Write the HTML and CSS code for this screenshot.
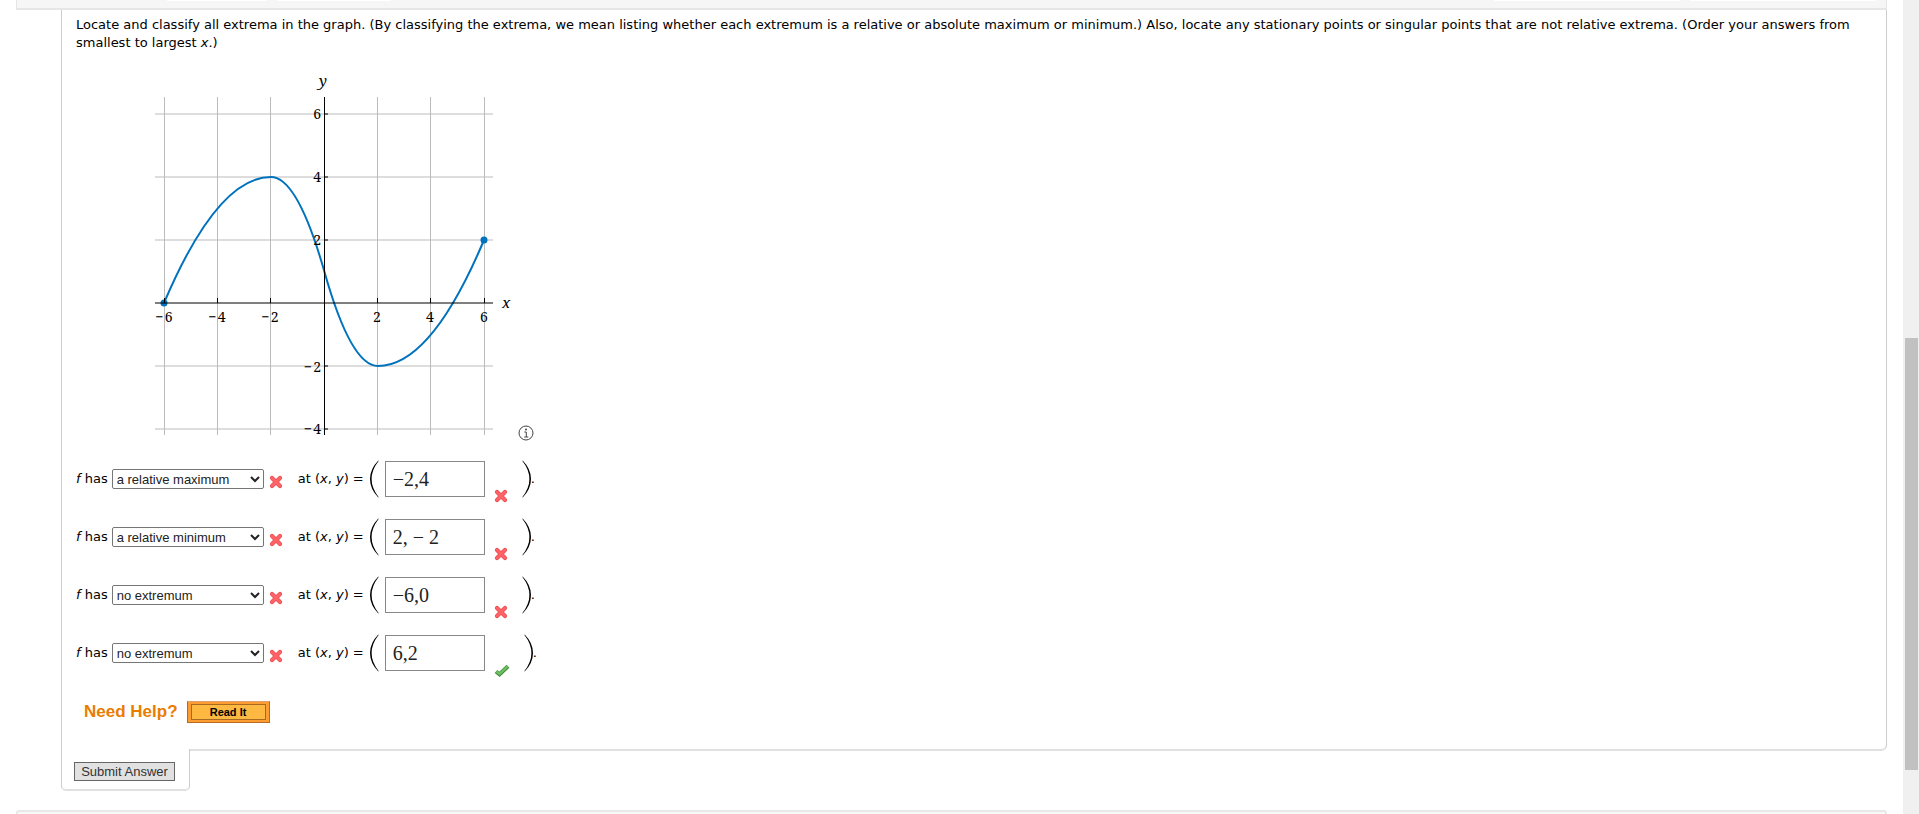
FILE: index.html
```html
<!DOCTYPE html>
<html lang="en">

<head>
  <meta charset="UTF-8">
  <meta name="viewport" content="width=device-width, initial-scale=1.0">
  <title>Extrema</title>
  <link rel="stylesheet" href="styles.css">
</head>

<body>
  <!-- shared answer marks and tall brackets -->
  <svg class="defs" aria-hidden="true">
    <symbol id="wrong" viewBox="0 0 14 14">
      <path d="M3 3L11 11M11 3L3 11" stroke="#ee484c" stroke-width="4.2" stroke-linecap="round" />
      <path d="M3 3L11 11M11 3L3 11" stroke="#fd6468" stroke-width="2.8" stroke-linecap="round" />
    </symbol>
    <symbol id="right" viewBox="0 0 16 14">
      <path d="M2 8.500L5.500 11.300L14 3.200" fill="none" stroke="#3f8f3b" stroke-width="4" />
      <path d="M2.500 8.500L5.500 11L13.500 3.400" fill="none" stroke="#6cbf63" stroke-width="2.400" />
    </symbol>
    <symbol id="open" viewBox="0 0 9 38">
      <path d="M8.300 0.500Q0 9 0 19T8.300 37.500L8.600 37Q1.600 28 1.600 19T8.600 1Z" />
    </symbol>
    <symbol id="close" viewBox="0 0 9 38">
      <path d="M0.700 0.500Q9 9 9 19T0.700 37.500L0.400 37Q7.400 28 7.400 19T0.400 1Z" />
    </symbol>
  </svg>

  <div class="page">
    <div class="main">
      <div class="top-bar"><span></span><span></span><i></i><span></span><span></span></div>

      <form class="question">
        <div class="content">
          <p>Locate and classify all extrema in the graph. (By classifying the extrema, we mean listing whether each extremum is a relative or absolute maximum or minimum.) Also, locate any stationary points or singular points that are not relative extrema. (Order your answers from smallest to largest <i>x</i>.)</p>

          <div class="graph">
            <svg width="376" height="376" viewBox="140 65 376 376" role="img" aria-label="Graph of f">
              <path class="grid" d="M164.500 97V435M217.500 97V435M270.500 97V435M377.500 97V435M430.500 97V435M484.500 97V435" />
              <path class="grid" d="M155 114H493M155 177H493M155 240H493M155 366H493M155 429H493" />
              <path class="curve" d="M164 303Q217.500 177 271 177Q297.500 177 324.500 272Q351 366 378 366Q431 366 484 240" />
              <circle cx="164" cy="303" r="3.500" />
              <circle cx="484" cy="240" r="3.500" />
              <path class="axis" d="M324.500 97V435M324 114H328M324 177H328M324 240H328M324 366H328M324 429H328" />
              <path class="axis" d="M155 303H493M164.500 303V298M217.500 303V298M270.500 303V298M377.500 303V298M430.500 303V298M484.500 303V298" />
              <g class="ticks" text-anchor="end">
                <text x="321" y="119">6</text>
                <text x="321" y="182">4</text>
                <text x="321" y="245">2</text>
                <text x="321" y="372">−&#8202;2</text>
                <text x="321" y="434">−&#8202;4</text>
              </g>
              <g class="ticks" text-anchor="middle">
                <text x="164" y="322">−&#8202;6</text>
                <text x="217" y="322">−&#8202;4</text>
                <text x="270" y="322">−&#8202;2</text>
                <text x="377" y="322">2</text>
                <text x="430" y="322">4</text>
                <text x="484" y="322">6</text>
              </g>
              <text class="name" x="323" y="86">y</text>
              <text class="name" x="506" y="308">x</text>
            </svg>
            <svg class="info" width="16" height="16" viewBox="0 0 16 16">
              <circle cx="8" cy="8" r="7" />
              <circle class="dot" cx="8" cy="4.500" r="1" />
              <path d="M6.300 7H8.300V12M6.300 12H10.300" />
            </svg>
          </div>

          <div class="row">
            <label for="s1"><i>f</i> has</label>
            <select id="s1"><option>a relative maximum</option></select>
            <svg class="mark"><use href="#wrong" /></svg>
            <label class="at" for="p1">at (<i>x</i>, <i>y</i>) =</label>
            <svg class="paren"><use href="#open" /></svg>
            <input id="p1" type="text" value="−2,4">
            <svg class="mark low"><use href="#wrong" /></svg>
            <svg class="paren"><use href="#close" /></svg><span>.</span>
          </div>
          <div class="row">
            <label for="s2"><i>f</i> has</label>
            <select id="s2"><option>a relative minimum</option></select>
            <svg class="mark"><use href="#wrong" /></svg>
            <label class="at" for="p2">at (<i>x</i>, <i>y</i>) =</label>
            <svg class="paren"><use href="#open" /></svg>
            <input id="p2" type="text" value="2, − 2">
            <svg class="mark low"><use href="#wrong" /></svg>
            <svg class="paren"><use href="#close" /></svg><span>.</span>
          </div>
          <div class="row">
            <label for="s3"><i>f</i> has</label>
            <select id="s3"><option>no extremum</option></select>
            <svg class="mark"><use href="#wrong" /></svg>
            <label class="at" for="p3">at (<i>x</i>, <i>y</i>) =</label>
            <svg class="paren"><use href="#open" /></svg>
            <input id="p3" type="text" value="−6,0">
            <svg class="mark low"><use href="#wrong" /></svg>
            <svg class="paren"><use href="#close" /></svg><span>.</span>
          </div>
          <div class="row">
            <label for="s4"><i>f</i> has</label>
            <select id="s4"><option>no extremum</option></select>
            <svg class="mark"><use href="#wrong" /></svg>
            <label class="at" for="p4">at (<i>x</i>, <i>y</i>) =</label>
            <svg class="paren"><use href="#open" /></svg>
            <input id="p4" type="text" value="6,2">
            <svg class="mark low ok"><use href="#right" /></svg>
            <svg class="paren"><use href="#close" /></svg><span>.</span>
          </div>

          <div class="help">
            <b>Need Help?</b>
            <button type="button"><span>Read It</span></button>
          </div>
        </div>
        <div class="submit">
          <button type="submit">Submit Answer</button>
        </div>
      </form>

      <div class="next"></div>
    </div>
    <div class="scrollbar"><div class="thumb"></div></div>
  </div>
</body>

</html>
```
FILE: styles.css
```css
* {
  box-sizing: border-box;
}

body {
  margin: 0;
  background: #fff;
  color: #000;
  font: 13px/18px Verdana, "DejaVu Sans", sans-serif;
}

p {
  margin: 0;
}

.defs {
  display: none;
}

.page {
  display: flex;
  height: 100vh;
  overflow: hidden;
}

.main {
  flex: 1;
  padding: 0 16px;
}

.scrollbar {
  width: 16px;
  padding: 338px 1px 0 2px;
  background: #f0f0f0;
}

.thumb {
  height: 432px;
  background: #c1c1c1;
}

.top-bar {
  display: flex;
  gap: 10px;
  height: 10px;
  padding: 0 10px 0 150px;
  border: solid #e6e6e6;
  border-width: 0 1px 2px;
  background: #f6f6f6;
}

/* lower edges of the buttons above */
.top-bar span {
  width: 100px;
  height: 1px;
  background: #fff;
}

.top-bar span + span {
  width: 114px;
}

.top-bar i {
  flex: 1;
}

.top-bar i ~ span {
  width: 186px;
}

.question {
  margin-left: 45px;
}

.content {
  padding: 6px 14px 0;
  height: 741px;
  border: solid #ccc;
  border-width: 0 1px 2px;
  border-radius: 0 0 6px 0;
  border-bottom-color: #e0e0e0;
}

.graph {
  display: flex;
  align-items: flex-end;
  padding: 13px 0 9px 64px;
}

.graph text {
  fill: #000;
  stroke: none;
}

.grid {
  stroke: #bbb;
}

.curve {
  fill: none;
  stroke: #0072bd;
  stroke-width: 2;
}

.graph circle {
  fill: #0072bd;
}

.axis {
  stroke: #000;
}

.ticks {
  font: 14px "Noto Serif", "DejaVu Serif", serif;
}

.name {
  font: italic 15px "Noto Serif", "DejaVu Serif", serif;
  text-anchor: middle;
}

.graph .info {
  margin-left: 2px;
  fill: none;
  stroke: #444;
}

.graph .info circle {
  fill: none;
}

.graph .info .dot {
  fill: #444;
  stroke: none;
}

.row {
  display: flex;
  align-items: center;
  height: 58px;
}

.row select {
  width: 152px;
  height: 20px;
  margin-left: 4px;
  padding: 0;
  border: 1px solid #767676;
  border-radius: 2px;
  background: #fff;
  color: #222;
  font: 13px "Liberation Sans", Arial, sans-serif;
}

.mark {
  width: 14px;
  height: 14px;
  margin: 5px 0 0 5px;
}

.at {
  margin-left: 15px;
}

.paren {
  width: 9px;
  height: 38px;
  margin-left: 6px;
}

.row input {
  width: 100px;
  height: 36px;
  margin-left: 6px;
  padding: 0 7px;
  border: 1px solid #888;
  color: #222;
  font: 20px "Liberation Serif", serif;
}

.low {
  margin: 34px 8px 0 9px;
}

.ok {
  width: 16px;
}

.help {
  display: flex;
  align-items: center;
  padding: 19px 0 0 8px;
}

.help b {
  color: #e97d00;
  font: bold 17px/22px "Liberation Sans", Arial, sans-serif;
}

.help button {
  width: 83px;
  height: 22px;
  margin-left: 9px;
  padding: 2px 3px;
  border: 1px solid #ba6a20;
  border-top-color: #e0a070;
  background: #fb9d32;
}

.help button span {
  display: block;
  border: 1px solid #a86a20;
  background: #fdb942;
  font: bold 11px/14px "Liberation Sans", Arial, sans-serif;
}

.submit {
  width: 129px;
  height: 42px;
  margin-top: -2px;
  padding: 13px 12px 0;
  border: solid #ccc;
  border-width: 0 1px 2px;
  border-bottom-color: #e0e0e0;
  border-radius: 0 0 5px 5px;
  background: #fff;
}

.submit button {
  width: 101px;
  height: 19px;
  padding: 0;
  border: 1px solid #666;
  background: #e1e1e1;
  color: #333;
  font: 13px "Liberation Sans", Arial, sans-serif;
}

.next {
  height: 24px;
  margin-top: 19px;
  border: 2px solid #e8e8e8;
  border-radius: 3px;
  background: #f8f8f8;
}
```
